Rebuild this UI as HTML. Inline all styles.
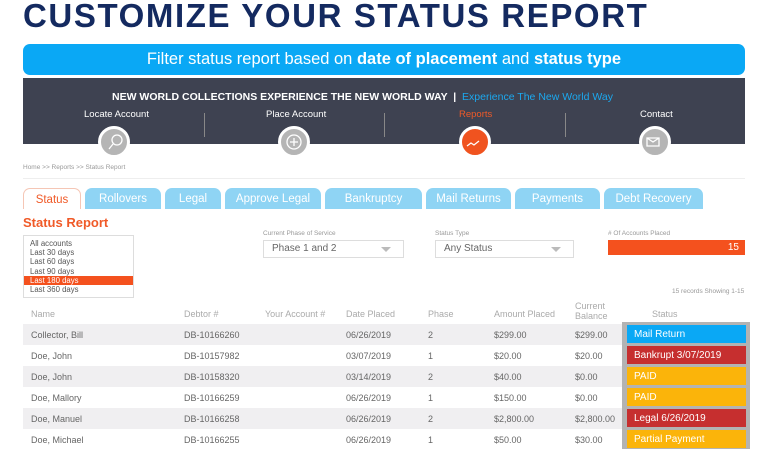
<!DOCTYPE html><html><head><style>
*{margin:0;padding:0;box-sizing:border-box}
body{width:768px;height:449px;overflow:hidden;background:#fff;font-family:"Liberation Sans",sans-serif;position:relative}
.a{position:absolute;white-space:nowrap}
.title{left:23px;top:-3px;font-size:33px;font-weight:bold;color:#142a60;letter-spacing:1.6px}
.bar{left:23px;top:44px;width:722px;height:31px;background:#0aa8f5;border-radius:7px;color:#fff;font-size:16.5px;text-align:center;line-height:31px}
.nav{left:23px;top:78px;width:722px;height:66px;background:#3e4251}
.nt{color:#fff;font-size:9.5px}
.sep{top:113px;width:1px;height:24px;background:#888}
.ic{width:32px;height:32px;border-radius:50%;background:#b5b5b5;border:3px solid #fff;top:126px}
.tab{top:188px;height:21px;background:#8fd4f4;color:#fff;font-size:11.5px;text-align:center;line-height:22px;border-radius:7px 7px 0 0}
.sm{font-size:6.5px;color:#999}
.row{left:23px;width:722px;height:21px;font-size:9px;color:#666}
.row span{position:absolute;top:6px}
.st{left:627px;width:119px;height:18px;color:#fff;font-size:10px;line-height:19px;padding-left:7px}
.sel{height:18px;border:1px solid #ddd;font-size:10px;color:#666;line-height:16px;padding-left:8px}
.sel:after{content:"";position:absolute;right:12px;top:6px;border:5px solid transparent;border-top:5px solid #bbb}
</style></head><body>
<div class="a title">CUSTOMIZE YOUR STATUS REPORT</div>
<div class="a bar">Filter status report based on <b>date of placement</b> and <b>status type</b></div>
<div class="a nav"></div>
<div class="a nt" style="left:112px;top:91px;font-weight:bold;font-size:10.5px">NEW WORLD COLLECTIONS EXPERIENCE THE NEW WORLD WAY &nbsp;| &nbsp;<span style="color:#1ca8ee;font-weight:normal">Experience The New World Way</span></div>
<div class="a nt" style="left:84px;top:109px">Locate Account</div>
<div class="a nt" style="left:266px;top:109px">Place Account</div>
<div class="a nt" style="left:459px;top:109px;color:#f05a28">Reports</div>
<div class="a nt" style="left:640px;top:109px">Contact</div>
<div class="a sep" style="left:204px"></div><div class="a sep" style="left:384px"></div><div class="a sep" style="left:565px"></div>
<div class="a ic" style="left:98px"></div><div class="a ic" style="left:278px"></div><div class="a ic" style="left:459px;background:#f0531f"></div><div class="a ic" style="left:639px"></div>
<svg class="a" style="left:0;top:0" width="768" height="170"><g stroke="#fff" fill="none" stroke-width="1.3"><circle cx="117" cy="140" r="5"/><line x1="113" y1="144" x2="109" y2="149"/><circle cx="294" cy="142" r="7"/><path d="M294 138v8M290 142h8"/><path d="M467 146l4-3 3 2 5-4" /><path d="M647 138h12v8h-12zM647 138l6 4 6-4"/></g></svg>
<div class="a sm" style="left:23px;top:164px">Home &gt;&gt; Reports &gt;&gt; Status Report</div>
<div class="a" style="left:23px;top:178px;width:722px;height:1px;background:#eee"></div>
<div class="a tab" style="left:23px;width:58px;background:#fff;border:1px solid #f5c6b5;border-bottom:none;color:#f05a28">Status</div>
<div class="a tab" style="left:85px;width:76px">Rollovers</div>
<div class="a tab" style="left:165px;width:56px">Legal</div>
<div class="a tab" style="left:225px;width:96px">Approve Legal</div>
<div class="a tab" style="left:325px;width:97px">Bankruptcy</div>
<div class="a tab" style="left:426px;width:85px">Mail Returns</div>
<div class="a tab" style="left:515px;width:85px">Payments</div>
<div class="a tab" style="left:604px;width:99px">Debt Recovery</div>
<div class="a" style="left:23px;top:215px;font-size:13px;font-weight:bold;color:#f05a28">Status Report</div>
<div class="a" style="left:23px;top:235px;width:111px;height:63px;border:1px solid #ddd;font-size:7.8px;color:#555;line-height:9.2px;padding-top:3px">
<div style="padding-left:6px">All accounts</div><div style="padding-left:6px">Last 30 days</div><div style="padding-left:6px">Last 60 days</div><div style="padding-left:6px">Last 90 days</div><div style="padding-left:6px;background:#f4511e;color:#fff">Last 180 days</div><div style="padding-left:6px">Last 360 days</div></div>
<div class="a sm" style="left:263px;top:230px">Current Phase of Service</div>
<div class="a sel" style="left:263px;top:240px;width:141px">Phase 1 and 2</div>
<div class="a sm" style="left:435px;top:230px">Status Type</div>
<div class="a sel" style="left:435px;top:240px;width:139px">Any Status</div>
<div class="a sm" style="left:608px;top:230px"># Of Accounts Placed</div>
<div class="a" style="left:608px;top:240px;width:137px;height:15px;background:#f4511e;color:#fff;font-size:10px;text-align:right;padding-right:6px;line-height:15px">15</div>
<div class="a sm" style="left:672px;top:288px">15 records Showing 1-15</div>
<div class="a row" style="top:303px;color:#aaa;font-size:9px"><span style="left:8px;top:6px">Name</span><span style="left:161px;top:6px">Debtor #</span><span style="left:242px;top:6px">Your Account #</span><span style="left:323px;top:6px">Date Placed</span><span style="left:405px;top:6px">Phase</span><span style="left:471px;top:6px">Amount Placed</span><span style="left:552px;top:-2px;line-height:10px">Current<br>Balance</span><span style="left:629px;top:6px">Status</span></div>
<div class="a" style="left:622px;top:322px;width:128px;height:127px;background:#b3b3b3"></div>
<div id="rows"></div>
<script>
var d=[["Collector, Bill","DB-10166260","06/26/2019","2","$299.00","$299.00","Mail Return","#0aa8f5"],["Doe, John","DB-10157982","03/07/2019","1","$20.00","$20.00","Bankrupt 3/07/2019","#c62f2f"],["Doe, John","DB-10158320","03/14/2019","2","$40.00","$0.00","PAID","#fbb40a"],["Doe, Mallory","DB-10166259","06/26/2019","1","$150.00","$0.00","PAID","#fbb40a"],["Doe, Manuel","DB-10166258","06/26/2019","2","$2,800.00","$2,800.00","Legal 6/26/2019","#c62f2f"],["Doe, Michael","DB-10166255","06/26/2019","1","$50.00","$30.00","Partial Payment","#fbb40a"]];
var h="";d.forEach(function(r,i){var y=324+i*21;h+='<div class="a row" style="top:'+y+'px;width:599px;background:'+(i%2?'#fff':'#f0eff1')+'"><span style="left:8px">'+r[0]+'</span><span style="left:161px">'+r[1]+'</span><span style="left:323px">'+r[2]+'</span><span style="left:405px">'+r[3]+'</span><span style="left:471px">'+r[4]+'</span><span style="left:552px">'+r[5]+'</span></div><div class="a st" style="top:'+(y+1)+'px;background:'+r[7]+'">'+r[6]+'</div>';});
document.getElementById("rows").innerHTML=h;
</script>
</body></html>
